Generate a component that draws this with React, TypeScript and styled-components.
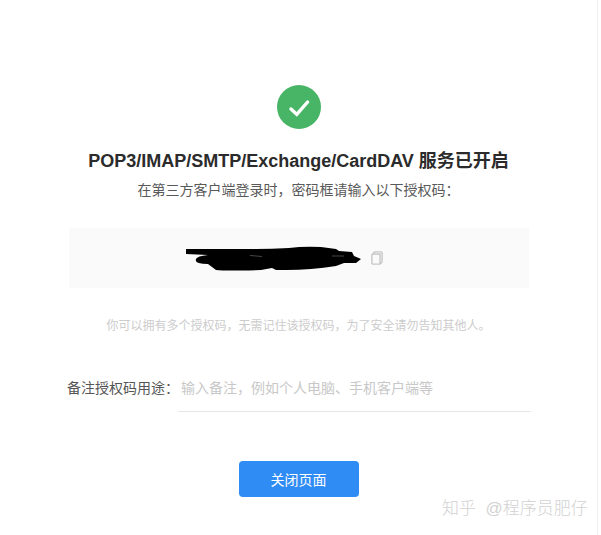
import styled, { createGlobalStyle } from 'styled-components';

const GlobalStyle = createGlobalStyle`
  html, body {
    margin: 0;
    padding: 0;
    background: #ffffff;
  }
  body {
    font-family: "Liberation Sans", "Noto Sans CJK SC", sans-serif;
  }
`;

const App = () => {
  return (
    <>
      <GlobalStyle />
      <Page>
        <Panel>
          <SuccessIcon viewBox="0 0 44 44" aria-hidden="true">
            <circle cx="22" cy="22" r="22" fill="#48b566" />
            <path
              d="M14 24 L19.8 29.4 L30.6 17"
              fill="none"
              stroke="#ffffff"
              strokeWidth="3.4"
              strokeLinecap="round"
            />
          </SuccessIcon>
          <Title>POP3/IMAP/SMTP/Exchange/CardDAV 服务已开启</Title>
          <Subtitle>在第三方客户端登录时，密码框请输入以下授权码：</Subtitle>
          <CodeBox>
            <Scribble viewBox="0 0 175 24" aria-hidden="true">
              <path
                d="M0 3 L70 3 Q85 3 103 2 Q118 0 135 1 L150 3 L153 5 L166 6 L168 10 L175 13 L170 17 L158 17 L150 20 Q125 24 100 24 L90 24 L86 22 L75 24 Q40 25 30 24 L22 18 Q8 18 10 13 Q11 10 22 9 L0 8 Z"
                fill="#000000"
              />
              <path d="M64 9.5 L76 10.5 M146 10 L158 10" stroke="#777777" strokeWidth="0.6" />
            </Scribble>
            <CopyIcon viewBox="0 0 12 14" aria-hidden="true">
              <path
                d="M1.8 3 L3 1.3 Q3.3 .9 3.9 .9 L10 .9 Q11.1 .9 11.1 2 L11.1 10.6 Q11.1 11.2 10.7 11.6 L9 13.1 L1.9 13.1 Q.9 13.1 .9 12.1 L.9 4 Q.9 3 1.9 3 L9 3 L9 13.1"
                fill="none"
                stroke="#c6c6c6"
                strokeWidth="1.4"
              />
            </CopyIcon>
          </CodeBox>
          <Note>你可以拥有多个授权码，无需记住该授权码，为了安全请勿告知其他人。</Note>
          <RemarkRow>
            <RemarkLabel>备注授权码用途：</RemarkLabel>
            <RemarkInput placeholder="输入备注，例如个人电脑、手机客户端等" />
          </RemarkRow>
          <CloseButton type="button">关闭页面</CloseButton>
        </Panel>
        <Watermark>知乎&nbsp;&nbsp;@程序员肥仔</Watermark>
      </Page>
    </>
  );
};

const Page = styled.div`
  position: relative;
  width: 601px;
  height: 535px;
  overflow: hidden;
  background: #ffffff;
`;

const Panel = styled.main`
  display: flex;
  flex-direction: column;
  align-items: center;
  box-sizing: border-box;
  width: 598px;
  height: 535px;
  padding-top: 85px;
  border-right: 1px solid #f1f1f1;
`;

const SuccessIcon = styled.svg`
  display: block;
  width: 44px;
  height: 44px;
`;

const Title = styled.h1`
  margin: 21px 0 0;
  color: #2b2b2b;
  font-size: 18px;
  font-weight: 700;
  line-height: 22px;
  white-space: nowrap;
`;

const Subtitle = styled.p`
  margin: 8px 0 0;
  color: #595959;
  font-size: 14px;
  line-height: 20px;
  white-space: nowrap;
`;

const CodeBox = styled.div`
  display: flex;
  align-items: center;
  justify-content: center;
  gap: 10px;
  box-sizing: border-box;
  width: 460px;
  height: 60px;
  margin-top: 28px;
  padding-right: 28px;
  background: #fafafa;
`;

const Scribble = styled.svg`
  display: block;
  width: 175px;
  height: 24px;
  overflow: visible;
`;

const CopyIcon = styled.svg`
  display: block;
  width: 12px;
  height: 14px;
`;

const Note = styled.p`
  margin: 29px 0 0;
  color: #cccccc;
  font-size: 12px;
  line-height: 18px;
  white-space: nowrap;
`;

const RemarkRow = styled.div`
  display: flex;
  align-items: flex-start;
  align-self: flex-start;
  margin: 38px 0 0 67px;
`;

const RemarkLabel = styled.label`
  width: 111px;
  padding-top: 3px;
  color: #555555;
  font-size: 14px;
  line-height: 24px;
  white-space: nowrap;
`;

const RemarkInput = styled.input`
  box-sizing: border-box;
  width: 353px;
  height: 39px;
  padding: 0 0 9px 3px;
  border: 0;
  border-bottom: 1px solid #e6e6e6;
  outline: none;
  background: transparent;
  font-family: inherit;
  font-size: 14px;
  &::placeholder {
    color: #c8c8c8;
    opacity: 1;
  }
`;

const CloseButton = styled.button`
  width: 120px;
  height: 36px;
  margin-top: 49px;
  padding: 0;
  border: 0;
  border-radius: 4px;
  background: #2f8cf5;
  color: #ffffff;
  font-family: inherit;
  font-size: 14px;
`;

const Watermark = styled.div`
  position: absolute;
  left: 442px;
  top: 498px;
  color: #d2d2d2;
  font-size: 17px;
  font-weight: 300;
  line-height: 22px;
  white-space: nowrap;
`;

export default App;
